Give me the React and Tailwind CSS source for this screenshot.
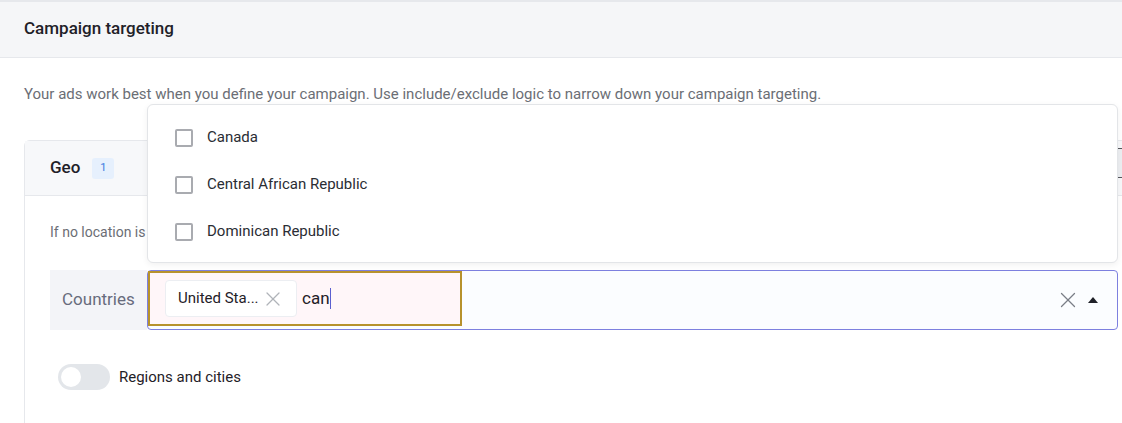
import { X } from 'lucide-react';

const options = ['Canada', 'Central African Republic', 'Dominican Republic'];

function Checkbox() {
  return <span className="w-[18px] h-[18px] shrink-0 rounded-[2px] border-2 border-[#a9abb0] bg-white" />;
}

export default function App() {
  return (
    <div className="w-[1122px] h-[423px] overflow-hidden bg-white font-['Roboto',sans-serif] text-[#1f2128]">
      <div className="h-[58px] flex items-center px-6 pb-[3px] bg-[#f5f6f8] border-t-2 border-b border-[#e6e8ec]">
        <h2 className="text-[17px] font-medium leading-5">Campaign targeting</h2>
      </div>

      <div className="px-6 pt-[26px]">
        <p className="text-[15px] leading-5 text-[#6b6e75]">
          Your ads work best when you define your campaign. Use include/exclude logic to narrow down your campaign targeting.
        </p>

        <div className="mt-[36px] w-[1160px] rounded-t-md border border-[#e6e8ec]">
          <div className="h-[55px] flex items-center px-[25px] bg-[#f7f8fa] border-b border-[#e6e8ec]">
            <span className="text-[17px] font-medium">Geo</span>
            <span className="ml-[12px] w-[22px] h-[21px] flex items-center justify-center rounded-[3px] bg-[#e6f0fd] text-[11px] text-[#3a7be0]">1</span>
            <span className="ml-auto mr-[21px] mb-[10px] w-[20px] h-[30px] border-y border-l border-[#55575c] bg-[#eceef1]" />
          </div>

          <div className="px-[25px] pt-[26px] pb-10">
            <p className="w-[97px] overflow-hidden whitespace-nowrap text-sm leading-5 text-[#6b6e75]">
              If no location is selected
            </p>

            <div className="mt-[28px] w-[1068px] flex h-[60px]">
              <div className="w-[97px] shrink-0 flex items-center pl-3 bg-[#f3f4f8] text-[17px] text-[#676b7d]">
                Countries
              </div>

              <div className="relative flex-1 flex items-stretch rounded-[4px] border border-[#7d80df] bg-[#fbfdff]">
                <div className="absolute left-[-1px] right-[-1px] bottom-[66px] z-10 h-[159px] py-[9px] rounded-md border border-[#e3e5e8] bg-white shadow-[0_2px_6px_rgba(0,0,0,0.06)]">
                  {options.map((o) => (
                    <div key={o} className="h-[47px] flex items-center gap-[14px] pl-[27px]">
                      <Checkbox />
                      <span className="text-[15px] text-[#2a2d34]">{o}</span>
                    </div>
                  ))}
                </div>

                <div className="w-[314px] h-[55px] flex items-center gap-[5px] pl-[15px] border-2 border-[#b7922c] bg-[#fff6f9]">
                  <span className="h-[37px] w-[132px] flex items-center pl-[12px] rounded-[4px] border border-[#eceef2] bg-white">
                    <span className="text-[15px] text-[#1f2128]">United Sta...</span>
                    <X className="ml-[2px] w-6 h-6 text-[#b0b3b9]" strokeWidth={1.25} />
                  </span>
                  <span className="flex items-center text-[17px]">
                    can<span className="w-[1.5px] h-[21px] bg-[#5b5fd0]" />
                  </span>
                </div>

                <div className="ml-auto flex items-center gap-[6px] pr-[18px]">
                  <X className="w-[26px] h-[26px] text-[#7a7e86]" strokeWidth={1.2} />
                  <svg width="12" height="8" viewBox="0 0 12 8">
                    <path d="M1 7 L6 1 L11 7 Z" fill="#1f2128" />
                  </svg>
                </div>
              </div>
            </div>

            <div className="mt-[34px] flex items-center gap-[9px] pl-2">
              <span className="w-[52px] h-[26px] rounded-full bg-[#e3e6ea] flex items-center px-[3px]">
                <span className="w-[20px] h-[20px] rounded-full bg-white" />
              </span>
              <span className="text-[15px]">Regions and cities</span>
            </div>
          </div>
        </div>
      </div>
    </div>
  );
}
